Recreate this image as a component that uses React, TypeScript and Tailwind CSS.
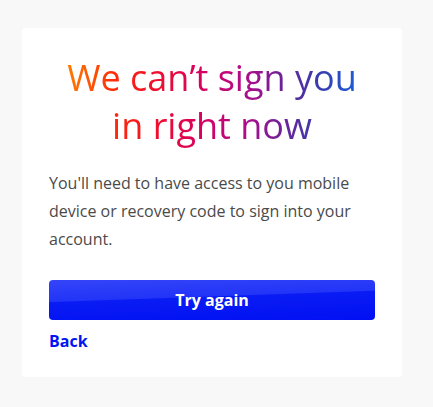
export default function App() {
  return (
    <div className="min-h-[407px] bg-[#f8f8f8] pt-[28px] pb-[30px] font-['Open_Sans','Liberation_Sans',sans-serif]">
      {/* Card */}
      <div className="ml-[22px] w-[380px] rounded-[4px] bg-white px-[27px] pt-[26px] pb-[24px]">
        {/* Heading */}
        <h1 className="bg-[linear-gradient(to_right,#ff7a00_6%,#ff2a0a_20%,#f0102a_32%,#d8005e_46%,#b00c8a_60%,#6a2398_72%,#3b3aab_82%,#1560de_96%)] bg-clip-text text-center text-[36px] leading-[48px] font-normal text-transparent">
          We can’t sign you
          <br />
          in right now
        </h1>

        {/* Message */}
        <p className="mt-[19px] text-[16px] leading-[28px] text-[#4a4a4a]">
          You'll need to have access to you mobile device or recovery code to sign into your account.
        </p>

        {/* Try again button */}
        <button className="mt-[27px] flex h-[40px] w-full items-center justify-center rounded-[4px] bg-[linear-gradient(178deg,#3445f8_0%,#2234f7_42%,#0a1cf4_44%,#0010f3_100%)] text-[16px] font-bold text-white">
          Try again
        </button>

        {/* Back link */}
        <div className="mt-[9px]">
          <a className="text-[16px] leading-[24px] font-bold text-[#0015f2]">Back</a>
        </div>
      </div>
    </div>
  );
}
